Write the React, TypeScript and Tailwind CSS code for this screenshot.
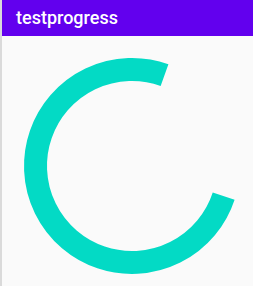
import React from "react";

export default function App() {
  const cx = 110;
  const cy = 110;
  const r = 96.5;
  const pt = (deg: number) => {
    const a = (deg * Math.PI) / 180;
    return [cx + r * Math.sin(a), cy - r * Math.cos(a)];
  };
  const [x1, y1] = pt(108.2);
  const [x2, y2] = pt(19.7);
  const d = `M ${x1} ${y1} A ${r} ${r} 0 1 1 ${x2} ${y2}`;
  return (
    <div className="w-[253px] h-[286px] flex bg-[#fafafa] overflow-hidden">
      <div className="w-[2px] h-full bg-[#dadada]" />
      <div className="flex-1 flex flex-col">
        <div className="h-[36px] bg-[#6200ee] flex items-center pl-[14px]">
          <span
            className="text-white text-[18px] font-medium leading-none"
            style={{ fontFamily: "Roboto, 'Noto Sans', sans-serif" }}
          >
            testprogress
          </span>
        </div>
        <div className="pt-[20px] pl-[20px]">
          <svg width="220" height="220" viewBox="0 0 220 220">
            <path d={d} fill="none" stroke="#03dac5" strokeWidth="23" />
          </svg>
        </div>
      </div>
    </div>
  );
}
